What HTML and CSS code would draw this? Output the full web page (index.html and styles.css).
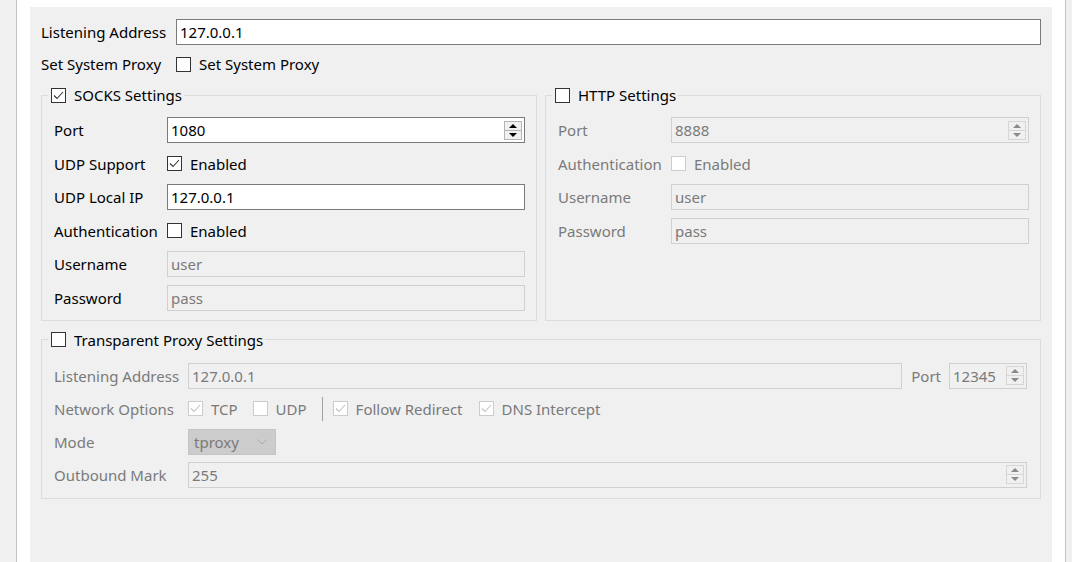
FILE: index.html
```html
<!DOCTYPE html>
<html>
<head>
<meta charset="utf-8">
<link rel="stylesheet" href="styles.css">
</head>
<body>
<div class="frame">
  <div class="lstrip"></div>
  <div class="page">
    <div class="panel">
      <div class="row top-row">
        <div class="lbl w135">Listening Address</div>
        <div class="edit grow">127.0.0.1</div>
      </div>
      <div class="row sys-row">
        <div class="lbl w135">Set System Proxy</div>
        <span class="cb"></span><span class="cbtext">Set System Proxy</span>
      </div>

      <div class="groups">
        <fieldset class="group">
          <legend><span class="legend-in"><span class="cb checked"><svg viewBox="0 0 13 13"><polyline points="2,6.5 5,9.5 11,3"/></svg></span><span class="cbtext">SOCKS Settings</span></span></legend>
          <div class="form">
            <div class="lbl">Port</div>
            <div class="edit spin"><span class="val">1080</span><span class="btns"><span class="sb"><i class="up"></i></span><span class="sb"><i class="dn"></i></span></span></div>
            <div class="lbl">UDP Support</div>
            <div class="cell"><span class="cb checked"><svg viewBox="0 0 13 13"><polyline points="2,6.5 5,9.5 11,3"/></svg></span><span class="cbtext">Enabled</span></div>
            <div class="lbl">UDP Local IP</div>
            <div class="edit">127.0.0.1</div>
            <div class="lbl">Authentication</div>
            <div class="cell"><span class="cb"></span><span class="cbtext">Enabled</span></div>
            <div class="lbl">Username</div>
            <div class="edit disabled">user</div>
            <div class="lbl">Password</div>
            <div class="edit disabled">pass</div>
          </div>
        </fieldset>

        <fieldset class="group">
          <legend><span class="legend-in"><span class="cb"></span><span class="cbtext">HTTP Settings</span></span></legend>
          <div class="form">
            <div class="lbl dis">Port</div>
            <div class="edit spin disabled"><span class="val">8888</span><span class="btns"><span class="sb"><i class="up"></i></span><span class="sb"><i class="dn"></i></span></span></div>
            <div class="lbl dis">Authentication</div>
            <div class="cell"><span class="cb dcb"></span><span class="cbtext dis">Enabled</span></div>
            <div class="lbl dis">Username</div>
            <div class="edit disabled">user</div>
            <div class="lbl dis">Password</div>
            <div class="edit disabled">pass</div>
          </div>
        </fieldset>
      </div>

      <fieldset class="group tgroup">
        <legend><span class="legend-in"><span class="cb"></span><span class="cbtext">Transparent Proxy Settings</span></span></legend>
        <div class="tform">
          <div class="lbl dis">Listening Address</div>
          <div class="cell">
            <div class="edit disabled grow">127.0.0.1</div>
            <span class="lbl dis port-lbl">Port</span>
            <div class="edit spin disabled port-spin"><span class="val">12345</span><span class="btns"><span class="sb"><i class="up"></i></span><span class="sb"><i class="dn"></i></span></span></div>
          </div>
          <div class="lbl dis">Network Options</div>
          <div class="cell">
            <span class="cb dcb"><svg viewBox="0 0 13 13"><polyline points="2,6.5 5,9.5 11,3"/></svg></span><span class="cbtext dis">TCP</span>
            <span class="cb dcb gap15"></span><span class="cbtext dis">UDP</span>
            <span class="sep"></span>
            <span class="cb dcb"><svg viewBox="0 0 13 13"><polyline points="2,6.5 5,9.5 11,3"/></svg></span><span class="cbtext dis">Follow Redirect</span>
            <span class="cb dcb gap16"><svg viewBox="0 0 13 13"><polyline points="2,6.5 5,9.5 11,3"/></svg></span><span class="cbtext dis">DNS Intercept</span>
          </div>
          <div class="lbl dis">Mode</div>
          <div class="cell"><div class="combo"><span>tproxy</span><svg viewBox="0 0 10 6"><polyline points="0.5,0.5 5,5 9.5,0.5"/></svg></div></div>
          <div class="lbl dis">Outbound Mark</div>
          <div class="edit spin disabled"><span class="val">255</span><span class="btns"><span class="sb"><i class="up"></i></span><span class="sb"><i class="dn"></i></span></span></div>
        </div>
      </fieldset>
    </div>
  </div>
  <div class="rstrip"></div>
</div>
</body>
</html>
```
FILE: styles.css
```css
* { box-sizing: border-box; }
html, body { margin: 0; padding: 0; }
body {
  width: 1072px; height: 562px; overflow: hidden;
  background: #f0f0f0;
  font-family: "Noto Sans", "Open Sans", sans-serif;
  font-size: 15px; color: #000;
}
.frame { display: flex; height: 562px; }
.lstrip { width: 17px; border-right: 1px solid #c4c4c4; background: #f0f0f0; }
.rstrip { width: 7px; border-left: 1px solid #c4c4c4; background: #f0f0f0; }
.page { flex: 1; background: #fff; padding: 7px 13px 0; display: flex; }
.panel { flex: 1; background: #f0f0f0; padding: 12px 11px 0 11px; }

.row { display: flex; align-items: center; height: 26px; }
.sys-row { margin-top: 6px; }
.w135 { width: 135px; flex: none; }
.grow { flex: 1; }
.lbl { white-space: nowrap; line-height: 20px; }
.dis { color: #7a7a7a; }

.edit {
  height: 26px; border: 1px solid #7a7a7a; background: #fff;
  padding: 0 3px; line-height: 24px; white-space: nowrap;
  display: flex; align-items: center;
}
.edit.disabled { border-color: #d0d0d0; background: #f0f0f0; color: #7a7a7a; }
.spin .val { flex: 1; }
.btns { display: flex; flex-direction: column; margin-right: -1px; }
.sb {
  width: 18px; height: 10px; border: 1px solid #b4b4b4; background: #f0f0f0;
  display: flex; align-items: center; justify-content: center;
}
.sb + .sb { margin-top: -1px; }
.sb i { width: 0; height: 0; border-left: 4px solid transparent; border-right: 4px solid transparent; }
.sb i.up { border-bottom: 4px solid #000; }
.sb i.dn { border-top: 4px solid #000; }
.disabled .sb { border-color: #d6d6d6; }
.disabled .sb i.up { border-bottom-color: #8a8a8a; }
.disabled .sb i.dn { border-top-color: #8a8a8a; }

.cb {
  width: 15px; height: 15px; flex: none; border: 1px solid #333; background: #fff;
  display: inline-flex; align-items: center; justify-content: center;
}
.cb svg { width: 13px; height: 13px; }
.cb polyline { fill: none; stroke: #333; stroke-width: 1.1; }
.cb.dcb { border-color: #cccccc; }
.cb.dcb polyline { stroke: #c2c2c2; }
.cbtext { margin-left: 8px; white-space: nowrap; line-height: 20px; }

.groups { display: grid; grid-template-columns: 1fr 1fr; gap: 8px; margin-top: 8px; }
.group {
  margin: 0; border: 1px solid #dcdcdc; padding: 12px 11px 9px 12px; min-width: 0;
}
.group legend { padding: 0 2px 0 3px; margin-left: -6px; height: 20px; }
.legend-in { display: flex; align-items: center; height: 20px; }

.form {
  display: grid; grid-template-columns: 113px 1fr;
  grid-auto-rows: 26px; row-gap: 7.5px; align-items: center;
}
.cell { display: flex; align-items: center; height: 26px; }

.tgroup { margin-top: 9px; padding: 13px 13px 10px 12px; }
.tform {
  display: grid; grid-template-columns: 134px 1fr;
  grid-auto-rows: 26px; row-gap: 7px; align-items: center;
}
.port-lbl { margin: 0 8px 0 9px; }
.port-spin { width: 78px; flex: none; }
.gap15 { margin-left: 15px; }
.gap16 { margin-left: 16px; }
.sep { width: 1px; height: 24px; background: #a0a0a0; margin: 0 10px 0 15px; }

.combo {
  width: 88px; height: 26px; background: #cccccc; border: 1px solid #c4c4c4;
  display: flex; align-items: center; justify-content: space-between;
  padding: 0 8px 0 5px; color: #7a7a7a;
}
.combo svg { width: 10px; height: 6px; }
.combo polyline { fill: none; stroke: #a8a8a8; stroke-width: 1; }
```
